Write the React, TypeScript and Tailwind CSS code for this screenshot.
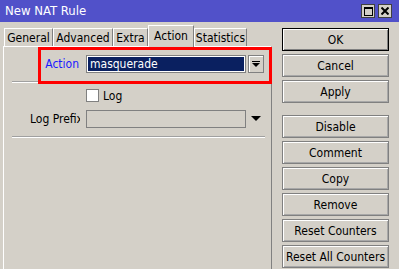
import React from 'react'

const font = { fontFamily: 'Tahoma, "DejaVu Sans Condensed", "DejaVu Sans", sans-serif' }

function WinButton({ label, primary }: { label: string; primary?: boolean }) {
  return (
    <div
      className={
        'h-[23px] w-[107px] flex items-center justify-center text-[12px] text-black bg-[#d4d0c8] ' +
        (primary
          ? 'border border-black shadow-[inset_1px_1px_0_#ffffff,inset_-1px_-1px_0_#808080]'
          : 'border border-[#808080] shadow-[inset_1px_1px_0_#ffffff,inset_-1px_-1px_0_#a8a8a8]')
      }
    >
      {label}
    </div>
  )
}

function Tab({ label, w, active }: { label: string; w: string; active?: boolean }) {
  if (active) {
    return (
      <div
        className={`${w} h-[22px] -mb-[1px] relative z-10 flex items-center justify-center text-[12px] bg-[#d4d0c8] border-t border-l border-white border-r border-r-[#808080] pb-[2px]`}
      >
        {label}
      </div>
    )
  }
  return (
    <div
      className={`${w} h-[18px] flex items-center justify-center text-[12px] bg-[#d4d0c8] border-t border-l border-white border-r border-r-[#808080]`}
    >
      {label}
    </div>
  )
}

export default function App() {
  return (
    <div className="relative w-[399px] h-[269px] overflow-hidden bg-[#d4d0c8] text-black" style={font}>
      {/* title bar */}
      <div className="h-[22px] bg-[#5151c9] flex items-center justify-between pl-[5px] pr-[7px]">
        <span className="text-white text-[13px]">New NAT Rule</span>
        <div className="flex gap-[3px]">
          <div className="w-[14px] h-[14px] bg-[#d4d0c8] border border-[#404040] flex items-center justify-center">
            <div className="w-[9px] h-[9px] border border-black border-t-2" />
          </div>
          <div className="w-[14px] h-[14px] bg-[#d4d0c8] border border-[#404040] flex items-center justify-center">
            <svg width="8" height="8" viewBox="0 0 8 8">
              <path d="M0.5 0.5 L7.5 7.5 M7.5 0.5 L0.5 7.5" stroke="black" strokeWidth="2" />
            </svg>
          </div>
        </div>
      </div>

      <div className="flex">
        {/* left: tabs + panel */}
        <div className="w-[272px]">
          <div className="h-[24px] flex items-end pl-[4px]">
            <Tab label="General" w="w-[49px]" />
            <Tab label="Advanced" w="w-[60px]" />
            <Tab label="Extra" w="w-[35px]" />
            <Tab label="Action" w="w-[46px]" active />
            <Tab label="Statistics" w="w-[53px]" />
          </div>
          <div className="ml-[3px] h-[223px] border-t border-l border-white border-r border-r-[#808080] pt-[8px]">
            <div className="flex items-center h-[18px]">
              <div className="w-[78px] text-right text-[12px] text-[#1a1aff] pr-[3px]">Action</div>
              <div className="ml-[4px] w-[160px] h-[18px] border border-[#808080] bg-white p-[1px]">
                <div className="h-full bg-[#0a2060] text-white text-[12px] leading-[14px] pl-[2px]">masquerade</div>
              </div>
              <div className="ml-[2px] w-[16px] h-[18px] border border-[#808080] shadow-[inset_1px_1px_0_#ffffff] flex items-center justify-center">
                <svg width="8" height="8" viewBox="0 0 8 8">
                  <path d="M0 1.5 H8" stroke="black" strokeWidth="1" />
                  <path d="M0 3 H8 L4 7 Z" fill="black" />
                </svg>
              </div>
            </div>
            <div className="ml-[8px] mr-[6px] mt-[8px] h-[2px] border-t border-[#a0a0a0] border-b border-b-white" />
            <div className="flex items-center h-[13px] mt-[6px] pl-[82px]">
              <div className="w-[13px] h-[13px] bg-white border border-[#808080]" />
              <span className="ml-[4px] text-[12px]">Log</span>
            </div>
            <div className="flex items-center h-[18px] mt-[8px]">
              <div className="w-[76px] overflow-hidden whitespace-nowrap text-right text-[12px] pl-[26px]">Log Prefix</div>
              <div className="ml-[6px] w-[160px] h-[18px] border border-[#808080] bg-[#d4d0c8]" />
              <svg width="10" height="6" viewBox="0 0 10 6" className="ml-[5px]">
                <path d="M0 0 H10 L5 5 Z" fill="black" />
              </svg>
            </div>
            <div className="ml-[8px] mr-[6px] mt-[8px] h-[2px] border-t border-[#a0a0a0] border-b border-b-white" />
          </div>
        </div>

        {/* right: buttons */}
        <div className="ml-[10px] pt-[6px] flex flex-col gap-[3px]">
          <WinButton label="OK" primary />
          <WinButton label="Cancel" />
          <WinButton label="Apply" />
          <div className="h-[6px]" />
          <WinButton label="Disable" />
          <WinButton label="Comment" />
          <WinButton label="Copy" />
          <WinButton label="Remove" />
          <WinButton label="Reset Counters" />
          <WinButton label="Reset All Counters" />
        </div>
      </div>

      {/* red highlight annotation */}
      <div className="absolute left-[38px] top-[47px] w-[234px] h-[37px] border-[3px] border-[#ff0000]" />
    </div>
  )
}
